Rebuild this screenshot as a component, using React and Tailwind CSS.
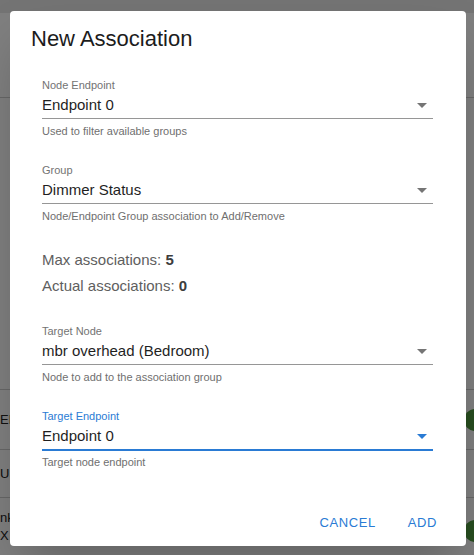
import React from 'react';

const BLUE = '#2a7bd4';

const Arrow = ({ color }) => (
  <svg width="10" height="5" viewBox="0 0 10 5" className="mr-[6px]">
    <path d="M0 0 L10 0 L5 5 Z" fill={color} />
  </svg>
);

const SelectField = ({ label, value, helper, focused }) => (
  <div className="flex flex-col">
    <div className={focused ? 'text-[11px] leading-[13px] text-[#2a7bd4]' : 'text-[11px] leading-[13px] text-[#737373]'}>
      {label}
    </div>
    <div
      className={
        focused
          ? 'mt-[3px] flex items-center justify-between pb-[3px] border-b-2 border-[#2a7bd4]'
          : 'mt-[3px] flex items-center justify-between pb-[3px] border-b border-[#969696]'
      }
    >
      <span className="text-[15px] leading-[20px] text-[#1f1f1f]">{value}</span>
      <Arrow color={focused ? BLUE : '#757575'} />
    </div>
    <div className={focused ? 'mt-[5px] text-[11px] leading-[13px] text-[#6f6f6f]' : 'mt-[6px] text-[11px] leading-[13px] text-[#6f6f6f]'}>
      {helper}
    </div>
  </div>
);

const App = () => {
  return (
    <div className="relative w-[474px] h-[555px] overflow-hidden bg-white font-['Liberation_Sans',Arial,sans-serif]">
      {/* page behind the dialog */}
      <div className="flex flex-col h-full">
        <div className="h-[13px] bg-[#e8e8e8]" />
        <div className="h-[85px] border-b border-[#cfcfcf]" />
        <div className="h-[292px] border-b border-[#cfcfcf]" />
        <div className="h-[60px] border-b border-[#cfcfcf] flex items-center justify-between">
          <span className="text-[13px] text-[#222]">EN</span>
          <span className="w-[22px] h-[22px] rounded-full bg-[#4f9a3f] mr-[-12px]" />
        </div>
        <div className="h-[48px] border-b border-[#cfcfcf] flex items-center">
          <span className="text-[13px] text-[#222]">US</span>
        </div>
        <div className="flex-1 flex items-center justify-between">
          <div className="flex flex-col text-[13px] leading-[18px] text-[#222]">
            <span>nk</span>
            <span>X</span>
          </div>
          <span className="w-[22px] h-[22px] rounded-full bg-[#4f9a3f] mr-[-12px] mt-[8px]" />
        </div>
      </div>

      {/* backdrop */}
      <div className="absolute inset-0 bg-black/50" />

      {/* dialog */}
      <div className="absolute left-[10px] top-[11px] w-[456px] h-[535px] bg-white rounded-[4px] shadow-2xl flex flex-col pt-[14px]">
        <h2 className="pl-[21px] text-[22px] leading-[28px] text-[#1c1c1c] font-normal">New Association</h2>

        <div className="mt-[26px] pl-[32px] pr-[33px] flex flex-col">
          <SelectField label="Node Endpoint" value="Endpoint 0" helper="Used to filter available groups" />

          <div className="mt-[26px]">
            <SelectField label="Group" value="Dimmer Status" helper="Node/Endpoint Group association to Add/Remove" />
          </div>

          <div className="mt-[27px] flex flex-col gap-[6px] text-[15px] leading-[20px] text-[#5e5e5e]">
            <p>
              Max associations: <b className="text-[#3d3d3d]">5</b>
            </p>
            <p>
              Actual associations: <b className="text-[#3d3d3d]">0</b>
            </p>
          </div>

          <div className="mt-[29px]">
            <SelectField label="Target Node" value="mbr overhead (Bedroom)" helper="Node to add to the association group" />
          </div>

          <div className="mt-[26px]">
            <SelectField label="Target Endpoint" value="Endpoint 0" helper="Target node endpoint" focused />
          </div>
        </div>

        <div className="mt-[40px] pr-[21px] flex justify-end gap-4">
          <button className="px-2 py-[6px] text-[13px] leading-[16px] tracking-[0.6px] text-[#2a7bd4]">CANCEL</button>
          <button className="px-2 py-[6px] text-[13px] leading-[16px] tracking-[0.6px] text-[#2a7bd4]">ADD</button>
        </div>
      </div>
    </div>
  );
};

export default App;
